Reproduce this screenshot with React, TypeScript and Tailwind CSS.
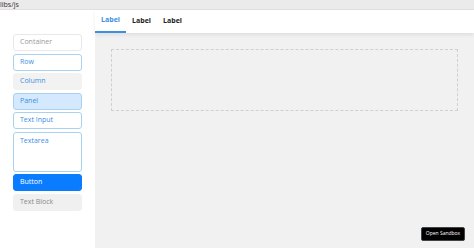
const items: { label: string; cls: string; h?: string }[] = [
  { label: 'Container', cls: 'bg-white border-[#e8e8e8] text-[#9a9a9a]' },
  { label: 'Row', cls: 'bg-white border-[#a9d2f2] text-[#3d8fe0]' },
  { label: 'Column', cls: 'bg-[#f2f2f2] border-[#f2f2f2] text-[#3d8fe0]' },
  { label: 'Panel', cls: 'bg-[#d4e9fd] border-[#a9d2f2] text-[#3d8fe0]' },
  { label: 'Text Input', cls: 'bg-white border-[#a9d2f2] text-[#3d8fe0]' },
  { label: 'Textarea', cls: 'bg-white border-[#a9d2f2] text-[#3d8fe0]', h: 'h-[40px] items-start pt-[3px]' },
  { label: 'Button', cls: 'bg-[#0a7cff] border-[#0a7cff] text-white' },
  { label: 'Text Block', cls: 'bg-[#f0f0f0] border-[#f0f0f0] text-[#8a8a8a]' },
];

export default function App() {
  return (
    <div className="w-[474px] h-[248px] flex flex-col bg-[#f1f1f1] overflow-hidden font-['Open_Sans',sans-serif]">
      {/* top strip */}
      <div className="h-[10px] bg-[#ebebeb] text-[7px] leading-[9px] text-[#333] border-b border-[#e0e0e0]">
        libs/js
      </div>

      <div className="flex flex-1">
        {/* palette */}
        <div className="w-[95px] bg-white flex flex-col gap-[2.5px] pl-[13px] pr-[13px] pt-[24px]">
          {items.map((it) => (
            <div
              key={it.label}
              className={`flex items-center h-[17px] px-[6px] rounded-[3px] border text-[7px] ${it.h ?? ''} ${it.cls}`}
            >
              {it.label}
            </div>
          ))}
        </div>

        {/* canvas */}
        <div className="flex-1 flex flex-col relative">
          <div className="h-[23px] bg-white flex items-stretch shadow-[0_2px_4px_rgba(0,0,0,0.08)] z-10">
            <div className="w-[31px] flex items-center justify-center text-[7px] font-bold text-[#3d8fe0] border-b-2 border-[#3d8fe0]">
              Label
            </div>
            <div className="w-[31px] flex items-center justify-center text-[7px] font-bold text-[#222]">
              Label
            </div>
            <div className="w-[31px] flex items-center justify-center text-[7px] font-bold text-[#222]">
              Label
            </div>
          </div>
          <div className="flex-1 pt-[16px] pl-[16px] pr-[16px]">
            <div className="h-[62px] border border-dashed border-[#cfcfcf]" />
          </div>
          <div className="absolute right-[9px] bottom-[7px] h-[14px] w-[44px] flex items-center justify-center bg-black text-white text-[5px] rounded-[2px] border border-[#444]">
            Open Sandbox
          </div>
        </div>
      </div>
    </div>
  );
}
